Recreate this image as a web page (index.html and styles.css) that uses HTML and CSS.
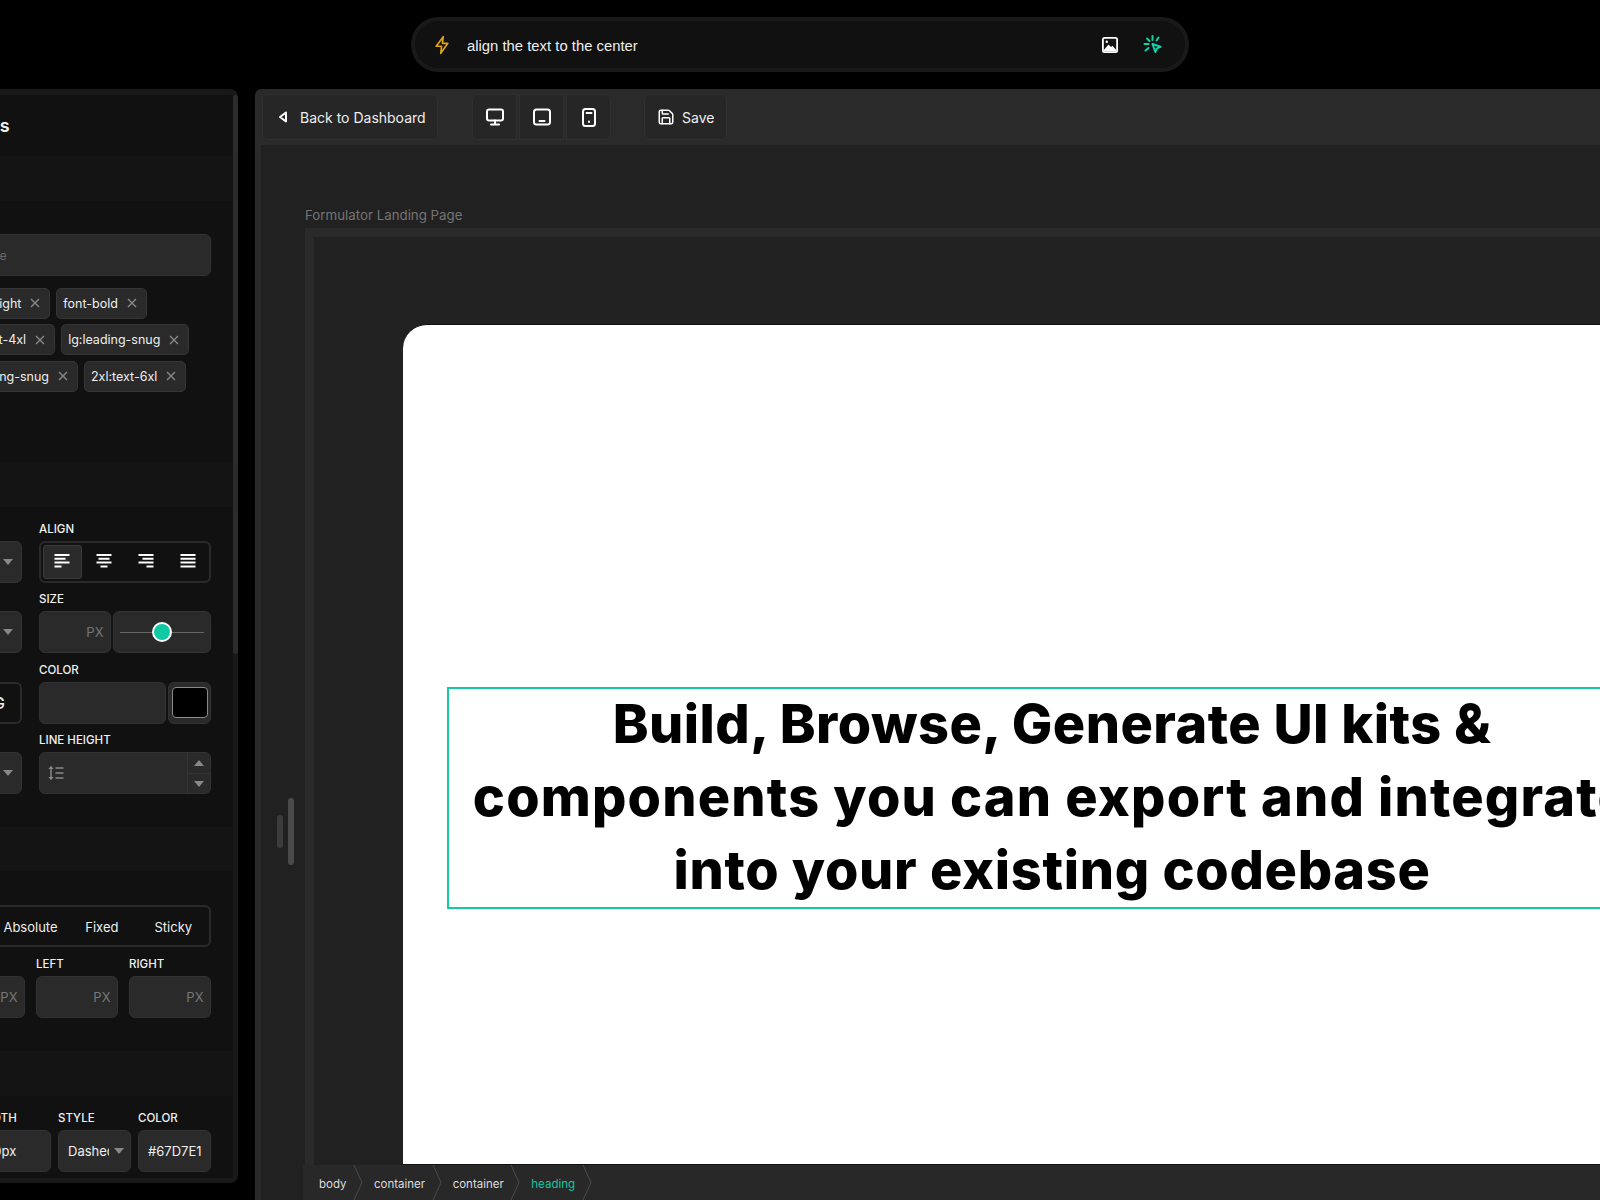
FILE: index.html
```html
<!DOCTYPE html>
<html lang="en">
<head>
<meta charset="utf-8">
<title>Formulator editor</title>
<link rel="stylesheet" href="styles.css">
</head>
<body>
<svg class="defs" width="0" height="0" aria-hidden="true">
  <symbol id="x" viewBox="0 0 12 12"><path d="M2 2l8 8M10 2l-8 8"/></symbol>
</svg>
<header class="prompt-row">
  <div class="prompt">
    <svg class="ico bolt" width="20" height="20" viewBox="0 0 24 24"><polygon points="13.5 2 5 13.5 11.5 13.5 10.5 22 19 10 12.5 10"/></svg>
    <span class="prompt-text">align the text to the center</span>
    <svg class="image-ico" width="16" height="16" viewBox="0 0 16 16"><rect width="16" height="16" rx="2.5" fill="#fff"/><rect x="1.8" y="1.8" width="12.4" height="12.4" rx="1" fill="#111"/><circle cx="4.8" cy="4.8" r="1.2" fill="#fff"/><path d="M1.8 13L6.5 7.6l2.5 2.4 1.6-1.2 3.6 4.2v1.2H1.8z" fill="#fff"/></svg>
    <svg class="ico click" width="20" height="20" viewBox="0 0 20 20"><path d="M9.5 1v4M15.5 2.5l-2 3M1.5 9h4M2.5 15.5l3-2.5M4 3.5l2.5 2.5M9.5 9l8 2.8-3.5 1.6-1.7 3.6z"/></svg>
  </div>
</header>
<main class="workspace">
  <aside class="panel">
    <div class="panel-scroll">
      <div class="panel-title">Heading Properties</div>
      <div class="sec-head">Classes</div>
      <section class="sec sec-classes">
        <div class="label">Class names</div>
        <div class="field class-input"><span class="placeholder">Type to add a class name</span></div>
        <div class="tags">
          <span class="tag tag-first">text-center<svg class="tag-x" width="12" height="12"><use href="#x"/></svg></span>
          <span class="tag">font-light<svg class="tag-x" width="12" height="12"><use href="#x"/></svg></span>
          <span class="tag">font-bold<svg class="tag-x" width="12" height="12"><use href="#x"/></svg></span>
          <span class="tag">md:text-3xl<svg class="tag-x" width="12" height="12"><use href="#x"/></svg></span>
          <span class="tag">lg:text-4xl<svg class="tag-x" width="12" height="12"><use href="#x"/></svg></span>
          <span class="tag">lg:leading-snug<svg class="tag-x" width="12" height="12"><use href="#x"/></svg></span>
          <span class="tag">xl:text-5xl<svg class="tag-x" width="12" height="12"><use href="#x"/></svg></span>
          <span class="tag">xl:leading-snug<svg class="tag-x" width="12" height="12"><use href="#x"/></svg></span>
          <span class="tag">2xl:text-6xl<svg class="tag-x" width="12" height="12"><use href="#x"/></svg></span>
        </div>
      </section>
      <div class="sec-head">Typography</div>
      <section class="sec sec-type">
        <div class="stack">
          <div class="label">Font</div>
          <div class="field select"><i class="caret"></i></div>
        </div>
        <div class="stack">
          <div class="label">Align</div>
          <div class="seg seg-align">
            <span class="cell active"><svg class="lines" width="16" height="14" viewBox="0 0 16 14"><path d="M.5 1h15M.5 4.8h11M.5 8.6h15M.5 12.4h7"/></svg></span>
            <span class="cell"><svg class="lines" width="16" height="14" viewBox="0 0 16 14"><path d="M.5 1h15M2.5 4.8h11M.5 8.6h15M4.5 12.4h7"/></svg></span>
            <span class="cell"><svg class="lines" width="16" height="14" viewBox="0 0 16 14"><path d="M.5 1h15M4.5 4.8h11M.5 8.6h15M8.5 12.4h7"/></svg></span>
            <span class="cell"><svg class="lines" width="16" height="14" viewBox="0 0 16 14"><path d="M.5 1h15M.5 4.8h15M.5 8.6h15M.5 12.4h15"/></svg></span>
          </div>
        </div>
        <div class="stack">
          <div class="label">Weight</div>
          <div class="field select"><i class="caret"></i></div>
        </div>
        <div class="stack">
          <div class="label">Size</div>
          <div class="split">
            <div class="field px-field size-input"><span class="unit">PX</span></div>
            <div class="field slider"><span class="track"></span><span class="thumb"></span></div>
          </div>
        </div>
        <div class="stack">
          <div class="label">Decoration</div>
          <div class="seg seg-deco">
            <span class="cell">B</span><span class="cell">I</span><span class="cell">U</span><span class="cell">G</span>
          </div>
        </div>
        <div class="stack">
          <div class="label">Color</div>
          <div class="split">
            <div class="field color-input"></div>
            <div class="field swatch-wrap"><span class="swatch"></span></div>
          </div>
        </div>
        <div class="stack">
          <div class="label">Spacing</div>
          <div class="field select"><i class="caret"></i></div>
        </div>
        <div class="stack">
          <div class="label">Line height</div>
          <div class="field stepper">
            <svg class="lh-ico" width="16" height="16" viewBox="0 0 16 16"><path class="lh-lines" d="M7.5 3h8M7.5 8h8M7.5 13h8M3 4v8"/><path class="lh-heads" d="M3 .8L5.6 4H.4zM3 15.2L.4 12h5.2z"/></svg>
            <div class="steps"><span class="step"><i class="caret up"></i></span><span class="step"><i class="caret"></i></span></div>
          </div>
        </div>
      </section>
      <div class="sec-head">Position</div>
      <section class="sec sec-pos">
        <div class="seg seg-pos">
          <span class="cell">Static</span><span class="cell">Relative</span><span class="cell">Absolute</span><span class="cell">Fixed</span><span class="cell">Sticky</span>
        </div>
        <div class="offsets">
          <div class="stack"><div class="label">Top</div><div class="field px-field"><span class="unit">PX</span></div></div>
          <div class="stack"><div class="label">Bottom</div><div class="field px-field"><span class="unit">PX</span></div></div>
          <div class="stack"><div class="label">Left</div><div class="field px-field"><span class="unit">PX</span></div></div>
          <div class="stack"><div class="label">Right</div><div class="field px-field"><span class="unit">PX</span></div></div>
        </div>
      </section>
      <div class="sec-head">Border</div>
      <section class="sec sec-border">
        <div class="stack"><div class="label">Radius</div><div class="field value-field">0px</div></div>
        <div class="stack"><div class="label">Width</div><div class="field value-field width-value">10px</div></div>
        <div class="stack"><div class="label">Style</div><div class="field value-field style-select"><span class="clip">Dashed</span><i class="caret"></i></div></div>
        <div class="stack"><div class="label">Color</div><div class="field value-field hex">#67D7E1</div></div>
      </section>
    </div>
    <div class="scrollbar"><span class="scroll-thumb"></span></div>
  </aside>
  <section class="canvas">
    <nav class="toolbar">
      <button class="btn back">
        <svg class="ico tri" width="10" height="12" viewBox="0 0 10 12"><polygon points="8 1.5 2 6 8 10.5"/></svg>
        Back to Dashboard
      </button>
      <div class="devices">
        <button class="btn dev"><svg class="ico" width="18" height="18" viewBox="0 0 18 18"><rect x="1" y="1.5" width="16" height="11" rx="2"/><path d="M9 12.5v3.5M5 16.5h8"/></svg></button>
        <button class="btn dev"><svg class="ico" width="18" height="18" viewBox="0 0 18 18"><rect x="1" y="1.5" width="16" height="15" rx="2.5"/><path d="M6.5 13h5"/></svg></button>
        <button class="btn dev"><svg class="ico" width="16" height="19" viewBox="0 0 16 19"><rect x="2" y="1" width="12" height="17" rx="2.5"/><path d="M5.5 5h5M8 13.5v.6"/></svg></button>
      </div>
      <button class="btn save">
        <svg class="ico" width="18" height="18" viewBox="0 0 24 24"><path d="M15.2 3a2 2 0 0 1 1.4.6l3.8 3.8a2 2 0 0 1 .6 1.4V19a2 2 0 0 1-2 2H5a2 2 0 0 1-2-2V5a2 2 0 0 1 2-2z"/><path d="M17 21v-7a1 1 0 0 0-1-1H8a1 1 0 0 0-1 1v7"/><path d="M7 3v4a1 1 0 0 0 1 1h7"/></svg>
        Save
      </button>
    </nav>
    <div class="stage">
      <div class="page-name">Formulator Landing Page</div>
      <div class="frame">
        <div class="page">
          <h1 class="hero"><span class="line line-a">Build, Browse, Generate UI kits &amp;</span><span class="line line-b">components you can export and integrate</span><span class="line line-c">into your existing codebase</span></h1>
        </div>
      </div>
      <div class="crumbs">
        <span class="crumb">body</span>
        <svg class="chev" width="10" height="35" viewBox="0 0 10 35"><path d="M1 0l8 17.5L1 35"/></svg>
        <span class="crumb">container</span>
        <svg class="chev" width="10" height="35" viewBox="0 0 10 35"><path d="M1 0l8 17.5L1 35"/></svg>
        <span class="crumb">container</span>
        <svg class="chev" width="10" height="35" viewBox="0 0 10 35"><path d="M1 0l8 17.5L1 35"/></svg>
        <span class="crumb current">heading</span>
        <svg class="chev" width="10" height="35" viewBox="0 0 10 35"><path d="M1 0l8 17.5L1 35"/></svg>
      </div>
      <span class="handle handle-a"></span>
      <span class="handle handle-b"></span>
    </div>
  </section>
</main>
</body>
</html>
```
FILE: styles.css
```css
* { box-sizing: border-box; }
html, body { margin: 0; height: 100%; }
body {
  width: 1600px;
  height: 1200px;
  overflow: hidden;
  background: #000;
  color: #eee;
  font-family: Inter, "Liberation Sans", sans-serif;
  display: flex;
  flex-direction: column;
}
.defs { position: absolute; }
.ico { fill: none; stroke: #fff; stroke-width: 2; stroke-linecap: round; stroke-linejoin: round; }

/* prompt */
.prompt-row { height: 89px; padding: 17px 411px 0; flex: none; }
.prompt {
  height: 55px;
  border: 4px solid #191919;
  border-radius: 28px;
  background: #111;
  display: flex;
  align-items: center;
  padding: 0 22px 0 17px;
}
.bolt { stroke: #e2a30e; flex: none; }
.prompt-text { margin-left: 15px; font-family: "Liberation Sans", sans-serif; font-size: 14.85px; line-height: 20px; padding-top: 2px; color: #eee; flex: 1; }
.image-ico { flex: none; margin-right: 25px; }
.click { stroke: #12d3a8; flex: none; }

/* layout */
.workspace { flex: 1; display: flex; min-height: 0; gap: 17px; margin-left: -170px; }

/* panel */
.panel {
  width: 408px;
  flex: none;
  height: 1094px;
  background: #191919;
  border-radius: 0 8px 8px 0;
  padding-top: 6px;
  padding-bottom: 5px;
  display: flex;
  overflow: hidden;
}
.panel-scroll { flex: 1; min-width: 0; background: #111; }
.scrollbar { width: 5px; flex: none; margin-top: -6px; padding-top: 6px; margin-bottom: -5px; }
.scroll-thumb { display: block; height: 559px; background: #2b2b2b; border-radius: 3px; }
.panel-title { height: 61px; padding: 21px 0 0 12px; font-size: 18px; line-height: 20px; font-weight: 600; color: #f2f2f2; white-space: nowrap; }
.sec-head { height: 44.5px; background: #141414; padding: 14px 20px; font-size: 13px; line-height: 16px; font-weight: 600; color: #eee; }
.sec { padding-left: 20px; padding-right: 22px; }
.label { font-size: 11.5px; line-height: 16px; height: 16px; font-weight: 550; color: #f0f0f0; text-transform: uppercase; margin-bottom: 4px; white-space: nowrap; }
.field {
  height: 42px;
  background: #2a2a2a;
  border: 1px solid #323232;
  border-radius: 6px;
  position: relative;
  display: flex;
  align-items: center;
  color: #eee;
  font-size: 13px;
}

/* classes */
.sec-classes { height: 261.5px; padding-top: 13px; }
.class-input { padding-left: 5px; }
.placeholder { color: #666; font-size: 12.5px; white-space: nowrap; padding-top: 2px; }
.tags { display: flex; flex-wrap: wrap; gap: 5.6px 6px; margin-top: 12px; }
.tag {
  height: 31px;
  display: inline-flex;
  align-items: center;
  gap: 8px;
  padding: 0 8px 0 6px;
  background: #2a2a2a;
  border: 1px solid #353535;
  border-radius: 5px;
  font-size: 12.5px;
  color: #eee;
  white-space: nowrap;
}
.tag-first { padding-left: 9px; }
.tag-x { stroke: #888; stroke-width: 1.4; fill: none; flex: none; }

/* typography */
.sec-type {
  height: 320px;
  padding-top: 14px;
  display: grid;
  grid-template-columns: 172px 172px;
  column-gap: 17px;
  row-gap: 8.6px;
  align-content: start;
}
.select { justify-content: flex-end; padding-right: 8px; }
.caret {
  display: block;
  width: 0;
  height: 0;
  border-left: 5px solid transparent;
  border-right: 5px solid transparent;
  border-top: 6px solid #888;
}
.caret.up { border-top: 0; border-bottom: 6px solid #888; }
.seg {
  height: 42px;
  background: #111;
  border: 2px solid #2a2a2a;
  border-radius: 6px;
  display: grid;
  align-items: stretch;
}
.cell { display: flex; align-items: center; justify-content: center; font-size: 13px; color: #eee; border-radius: 3px; }
.seg-align { grid-template-columns: repeat(4, 1fr); gap: 3px; padding: 2px; }
.seg-align .lines { margin-top: -2px; }
.cell.active { background: #2a2a2a; border: 1px solid #3a3a3a; }
.lines { fill: none; stroke: #fff; stroke-width: 2; }
.seg-deco { grid-template-columns: repeat(4, 1fr); }
.seg-deco .cell { font-size: 16px; font-weight: 500; }
.seg-pos { grid-template-columns: repeat(5, 1fr); }
.split { display: flex; gap: 2px; }
.size-input { width: 72px; flex: none; }
.px-field { justify-content: flex-end; padding-right: 6.5px; }
.unit { color: #777; font-size: 13px; }
.slider { flex: 1; }
.track { position: absolute; left: 6px; right: 6px; top: 50%; height: 1px; background: #666; }
.thumb {
  position: absolute;
  left: 38px;
  top: 10px;
  width: 20px;
  height: 20px;
  border-radius: 50%;
  background: #0fc8a4;
  border: 2px solid #fff;
}
.color-input { width: 127px; flex: none; }
.swatch-wrap { flex: 1; justify-content: center; }
.swatch { width: 36px; height: 31px; background: #000; border: 1.5px solid #8a8a8a; border-radius: 4px; }
.stepper { justify-content: space-between; padding-left: 8px; }
.lh-ico { flex: none; }
.lh-lines { fill: none; stroke: #888; stroke-width: 1.5; }
.lh-heads { fill: #888; }
.steps { width: 23px; height: 100%; border-left: 1px solid #343434; display: flex; flex-direction: column; }
.step { flex: 1; display: flex; align-items: center; justify-content: center; }
.step + .step { border-top: 1px solid #343434; }

/* position */
.sec-pos { height: 180px; padding-top: 34px; }
.seg-pos .cell { padding-top: 1px; }
.offsets { display: grid; grid-template-columns: repeat(4, 82px); column-gap: 11px; margin-top: 9px; }

/* border */
.sec-border {
  height: 82px;
  padding-top: 14px;
  display: grid;
  grid-template-columns: 121px 73px 73px 73px;
  column-gap: 7px;
}
.value-field { padding-left: 10px; white-space: nowrap; }
.width-value { padding-left: 9px; }
.clip { width: 41px; overflow: hidden; flex: none; }
.style-select { justify-content: space-between; padding-left: 9px; padding-right: 6px; }
.hex { padding-left: 9px; }

/* canvas */
.canvas { flex: 1; min-width: 0; display: flex; flex-direction: column; overflow: hidden; border-radius: 6px 0 0 0; }
.toolbar { height: 56px; flex: none; background: #2a2a2a; padding: 5px 0 0 7px; display: flex; align-items: flex-start; }
.btn {
  height: 46px;
  background: #262626;
  border: 1px solid #303030;
  border-radius: 6px;
  color: #eee;
  font-family: inherit;
  font-size: 14px;
  display: flex;
  align-items: center;
  padding: 0;
}
.back { width: 176px; padding-left: 15px; gap: 12px; }
.tri { flex: none; }
.devices { display: flex; gap: 2px; margin-left: 34px; }
.dev { width: 45px; justify-content: center; border-radius: 0; }
.dev:first-child { border-radius: 6px 0 0 6px; }
.dev:last-child { border-radius: 0 6px 6px 0; }
.save { width: 83px; margin-left: 33px; padding-left: 12px; gap: 7px; }

.stage {
  flex: 1;
  min-height: 0;
  position: relative;
  background: #212121;
  border-left: 6px solid #2a2a2a;
  display: flex;
  flex-direction: column;
  overflow: hidden;
}
.page-name { margin: 60px 0 3px 44px; font-size: 13.3px; line-height: 20px; color: #747474; flex: none; }
.frame {
  flex: 1;
  min-height: 0;
  margin-left: 44px;
  border-top: 9px solid #2a2a2a;
  border-left: 9px solid #2a2a2a;
  padding: 87px 0 0 89px;
  display: flex;
  overflow: hidden;
}
.page {
  width: 1400px;
  flex: none;
  background: #fff;
  border-radius: 24px 0 0 0;
  border-top: 1px solid #111;
  border-bottom: 1px solid #111;
  padding: 362px 0 0 44px;
}
.hero {
  width: 1210px;
  height: 222px;
  margin: 0;
  border: 2px solid #14c8a2;
  padding-top: 0;
  color: #000;
  font-family: Inter, sans-serif;
  font-size: 54px;
  line-height: 73px;
  font-weight: 800;
  text-align: center;
  white-space: nowrap;
}
.line { display: block; }
.line-a { margin-top: -2px; letter-spacing: .46px; }
.line-b { letter-spacing: 1.17px; }
.line-c { letter-spacing: .69px; }
.crumbs {
  height: 35px;
  flex: none;
  margin-left: 42px;
  background: #282828;
  display: flex;
  align-items: center;
  padding-left: 16px;
}
.crumb { font-size: 11.5px; color: #ddd; padding-top: 2px; }
.crumb.current { color: #12c7a1; }
.chev { flex: none; margin: 0 11px 0 6.5px; fill: none; stroke: #4a4a4a; stroke-width: 1; }
.handle { position: absolute; width: 6px; border-radius: 3px; }
.handle-a { left: 16px; top: 670px; height: 33px; background: #3c3c3c; }
.handle-b { left: 27px; top: 653px; height: 67px; background: #4a4a4a; }
```
